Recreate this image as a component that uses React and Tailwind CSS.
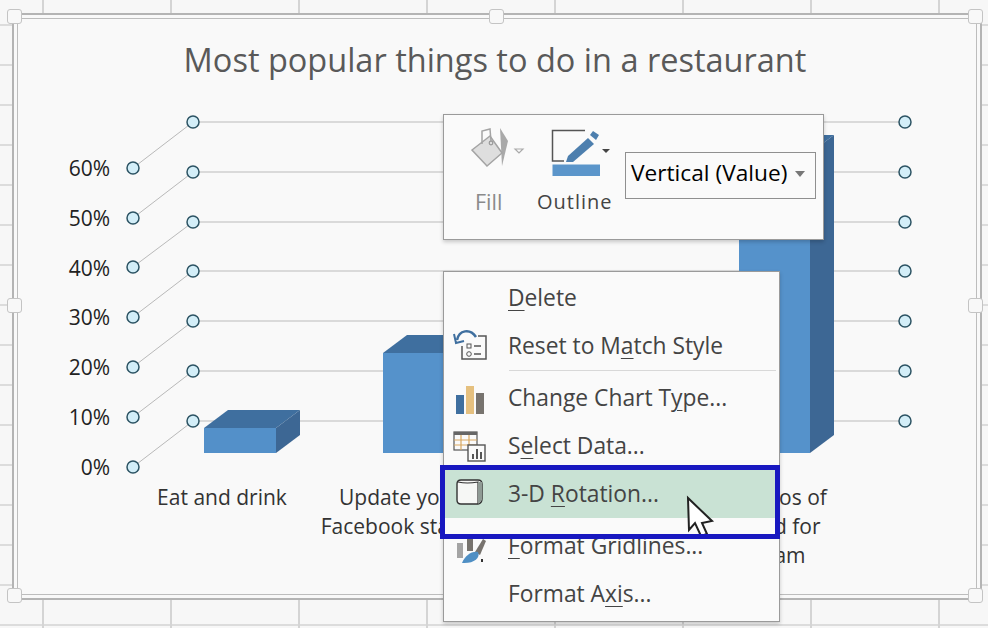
const ticks = [0, 1, 2, 3, 4, 5, 6];
const leftY = [168, 218, 267, 317, 367, 417, 467];
const backY = [122, 172, 222, 271, 321, 371, 421];
const axis = ["60%", "50%", "40%", "30%", "20%", "10%", "0%"];
const underline = "underline underline-offset-4 decoration-1";

function Chart() {
    return (
        <svg className="absolute left-0 top-0" width="988" height="628" viewBox="0 0 988 628">
            {ticks.map((i) => (
                <g key={i}>
                    <line x1="133" y1={leftY[i]} x2="193" y2={backY[i]} stroke="#b9b9b9" />
                    <line x1="193" y1={backY[i]} x2="905" y2={backY[i]} stroke="#cfcfcf" strokeWidth="1.5" />
                </g>
            ))}
            {/* bars */}
            <path d="M204 428 L228 410 H300 L276 428Z" fill="#3f6f9f" />
            <path d="M276 428 L300 410 V435 L276 453Z" fill="#3d6794" />
            <rect x="204" y="428" width="72" height="25" fill="#5390c9" />
            <path d="M383 353 L407 335 H480 L456 353Z" fill="#3f6f9f" />
            <rect x="383" y="353" width="72" height="100" fill="#5592cb" />
            <path d="M739 153 L763 135 H834 L810 153Z" fill="#3f6f9f" />
            <path d="M810 153 L834 135 V435 L810 453Z" fill="#3d6794" />
            <rect x="739" y="153" width="71" height="300" fill="#5592cb" />
            {ticks.map((i) => (
                <g key={i} fill="#d3eef8" stroke="#2c5363" strokeWidth="1.5">
                    <circle cx="133" cy={leftY[i]} r="6" />
                    <circle cx="193" cy={backY[i]} r="6" />
                    <circle cx="905" cy={backY[i]} r="6" />
                </g>
            ))}
        </svg>
    );
}

function Handle({ className }) {
    return <div className={"absolute w-[15px] h-[15px] bg-[#f8f8f8] border border-[#c4c4c4] rounded-[3px] " + className} />;
}

function Caret({ color }) {
    return (
        <svg width="10" height="6" viewBox="0 0 10 6">
            <path d="M0 0H10L5 6Z" fill={color} />
        </svg>
    );
}

function FillIcon() {
    return (
        <svg width="70" height="55" viewBox="0 0 70 55" fill="none">
            <path d="M35 8 L43 21 L37 46 Z" fill="#a9a9a9" />
            <path d="M7 30 L25 16 L37 33 L22 46 Z" fill="#dedede" stroke="#a4a4a4" strokeWidth="1.5" />
            <path d="M17 24 V11 L25 9 L26 21" stroke="#a4a4a4" strokeWidth="1.5" />
            <circle cx="26" cy="23" r="1.8" stroke="#999" strokeWidth="1.2" />
            <path d="M50 29 H58 L54 33Z" stroke="#aaa" strokeWidth="1.2" />
        </svg>
    );
}

function OutlineIcon() {
    return (
        <svg width="70" height="60" viewBox="0 0 70 60" fill="none">
            <path d="M40 10.5 H7.5 V41 H19" stroke="#555" strokeWidth="1.5" />
            <rect x="7.5" y="44.5" width="47.5" height="11.5" fill="#5b95ca" />
            <path d="M23 36 L43 18 L49 24 L28 42 L21 42Z" fill="#4d7fae" />
            <path d="M45 15 L48 11 L54 15 L51 20Z" fill="#4d7fae" />
            <path d="M57 29 H65 L61 33Z" fill="#444" />
        </svg>
    );
}

function ResetIcon() {
    return (
        <svg width="55" height="40" viewBox="0 0 55 40" fill="none">
            <path d="M12 14 C14 4 25 2 31 11" stroke="#3f6f9f" strokeWidth="2.5" />
            <path d="M9 8 L11 17 L19 15" stroke="#3f6f9f" strokeWidth="2" />
            <path d="M17 20 V33 H41 V10 H33" stroke="#555" strokeWidth="1.5" />
            <rect x="22" y="18" width="4" height="4" stroke="#555" />
            <circle cx="24" cy="28" r="2.3" stroke="#555" />
            <path d="M29 20 H36 M29 28 H36" stroke="#555" strokeWidth="1.5" />
        </svg>
    );
}

function ChartTypeIcon() {
    return (
        <svg width="55" height="40" viewBox="0 0 55 40">
            <rect x="11" y="17" width="8" height="19" fill="#3f6f9f" />
            <rect x="21" y="8" width="8" height="28" fill="#e5c07f" />
            <rect x="31" y="15" width="8" height="21" fill="#77736e" />
        </svg>
    );
}

function SelectDataIcon() {
    return (
        <svg width="55" height="40" viewBox="0 0 55 40" fill="none">
            <rect x="9" y="6" width="23" height="18" fill="#fafafa" stroke="#555" strokeWidth="1.2" />
            <rect x="9" y="6" width="23" height="3" fill="#666" />
            <path d="M9 14 H32 M9 19 H32 M16 9 V24 M24 9 V24" stroke="#d9a860" strokeWidth="1.2" />
            <rect x="23" y="19" width="17" height="16" fill="#fafafa" stroke="#555" strokeWidth="1.4" />
            <path d="M28 33 V28 M32 33 V23 M36 33 V26" stroke="#444" strokeWidth="1.8" />
        </svg>
    );
}

function RotationIcon() {
    return (
        <svg width="55" height="40" viewBox="0 0 55 40" fill="none">
            <path d="M16 6 H33 Q37 6 37 10 V25 Q37 29 33 30 H16 Q12 30 12 26 V10 Q12 6 16 6Z" fill="#f6f7f5" stroke="#333" strokeWidth="1.4" />
            <path d="M13 8 Q22 10 33 8 V30" stroke="#333" strokeWidth="1.2" />
            <path d="M33 8 L37 8 V26 L33 30Z" fill="#8f9a94" />
        </svg>
    );
}

function GridlinesIcon() {
    return (
        <svg width="55" height="40" viewBox="0 0 55 40">
            <rect x="12" y="17" width="6" height="15" fill="#a4a4a4" />
            <rect x="22" y="8" width="6" height="17" fill="#77736e" />
            <path d="M30 26 L38 13 L41 15 L35 29Z" fill="#77736e" />
            <path d="M17 37 C20 30 26 25 33 26 C36 32 28 38 17 37Z" fill="#4f8fc4" />
            <rect x="36" y="33" width="2" height="3" fill="#333" />
        </svg>
    );
}

function MenuRow({ icon, children, className = "" }) {
    return (
        <div className={"flex items-center h-12 " + className}>
            <div className="w-[64px] pl-[1px] flex items-center shrink-0">{icon}</div>
            <div>{children}</div>
        </div>
    );
}

export default function App() {
    return (
        <div
            className="relative w-[988px] h-[628px] overflow-hidden pl-[12px] pt-[13px] bg-[#f7f7f7] text-[#222] bg-[linear-gradient(to_right,#d4d4d4_2px,transparent_2px),linear-gradient(to_bottom,#dcdcdc_2px,transparent_2px)] bg-[size:128px_40px] bg-[position:42px_24px]"
            style={{ fontFamily: '"Open Sans", "Noto Sans", sans-serif' }}
        >
            {/* chart frame */}
            <div className="w-[970px] h-[587px] border-2 border-[#b4b4b4] bg-[#f9f9f9] p-[3px]">
                <div className="w-full h-full border border-[#bdbdbd] pt-[19px]">
                    <div className="text-center text-[32.5px] leading-[44px] text-[#595959] pr-[4px]">
                        Most popular things to do in a restaurant
                    </div>
                    <div className="mt-[72px] w-[92px] flex flex-col gap-[21.8px]">
                        {axis.map((label) => (
                            <div key={label} className="text-right text-[21px] leading-[28px] text-[#222]">{label}</div>
                        ))}
                    </div>
                    <div className="mt-[2px] ml-[115px] grid grid-cols-[repeat(4,178px)] text-center text-[21px] leading-[29px] text-[#333]">
                        <div>Eat and drink</div>
                        <div>Update your<br />Facebook status</div>
                        <div />
                        <div>Post photos of<br />your food for<br />Instagram</div>
                    </div>
                </div>
            </div>

            <Handle className="left-[7px] top-[9px]" />
            <Handle className="left-[7px] top-[298px]" />
            <Handle className="left-[7px] top-[588px]" />
            <Handle className="left-[489px] top-[9px]" />
            <Handle className="left-[489px] top-[591px]" />
            <Handle className="left-[968px] top-[9px]" />
            <Handle className="left-[968px] top-[298px]" />
            <Handle className="left-[968px] top-[588px]" />

            <Chart />

            {/* mini toolbar */}
            <div className="absolute left-[443px] top-[114px] w-[381px] h-[126px] bg-[#fafafa] border border-[#9a9a9a] shadow-[0_2px_4px_rgba(0,0,0,0.2)] flex">
                <div className="w-[80px] pt-[5px] pl-[21px]">
                    <FillIcon />
                    <div className="mt-[13px] ml-[10px] text-[21.5px] leading-[28px] text-[#8a8a8a]">Fill</div>
                </div>
                <div className="w-[101px] pt-[5px] pl-[21px]">
                    <OutlineIcon />
                    <div className="mt-[8px] ml-[-8px] text-[20px] leading-[28px] text-[#444] tracking-[1px]">Outline</div>
                </div>
                <div className="mt-[37px] w-[191px] h-[47px] border border-[#8f8f8f] bg-[#fafafa] flex items-center pl-[5px] pb-[4px] gap-[8px]">
                    <span className="text-[22.7px] text-black whitespace-nowrap">Vertical (Value)</span>
                    <Caret color="#777" />
                </div>
            </div>

            {/* context menu */}
            <div className="absolute left-[443px] top-[271px] w-[337px] h-[351px] pt-[2px] bg-[#fafafa] border border-[#9a9a9a] shadow-[0_2px_4px_rgba(0,0,0,0.2)] text-[22.8px] text-[#444]">
                <MenuRow><span className={underline}>D</span>elete</MenuRow>
                <MenuRow icon={<ResetIcon />}>Reset to M<span className={underline}>a</span>tch Style</MenuRow>
                <div className="ml-[65px] mr-[3px] h-[4px] border-t border-[#d8d8d8]" />
                <MenuRow icon={<ChartTypeIcon />}>Change Chart T<span className={underline}>y</span>pe...</MenuRow>
                <MenuRow icon={<SelectDataIcon />}>S<span className={underline}>e</span>lect Data...</MenuRow>
                <MenuRow icon={<RotationIcon />} className="bg-[#c9e2d4]">3-D <span className={underline}>R</span>otation...</MenuRow>
                <MenuRow icon={<GridlinesIcon />} className="mt-[4px]"><span className={underline}>F</span>ormat Gridlines...</MenuRow>
                <MenuRow>Format A<span className={underline}>x</span><span className={underline}>i</span>s...</MenuRow>
            </div>

            {/* mouse pointer */}
            <svg className="absolute left-[675px] top-[490px]" width="50" height="50" viewBox="0 0 50 50">
                <path d="M13 8 L14 40 L20 33 L26 46 L32 44 L27 33 L37 31 Z" fill="#fff" stroke="#222" strokeWidth="2" />
            </svg>

            {/* highlight box */}
            <div className="absolute left-[440px] top-[465px] w-[340px] h-[74px] border-[5px] border-[#1818c0]" />
        </div>
    );
}
